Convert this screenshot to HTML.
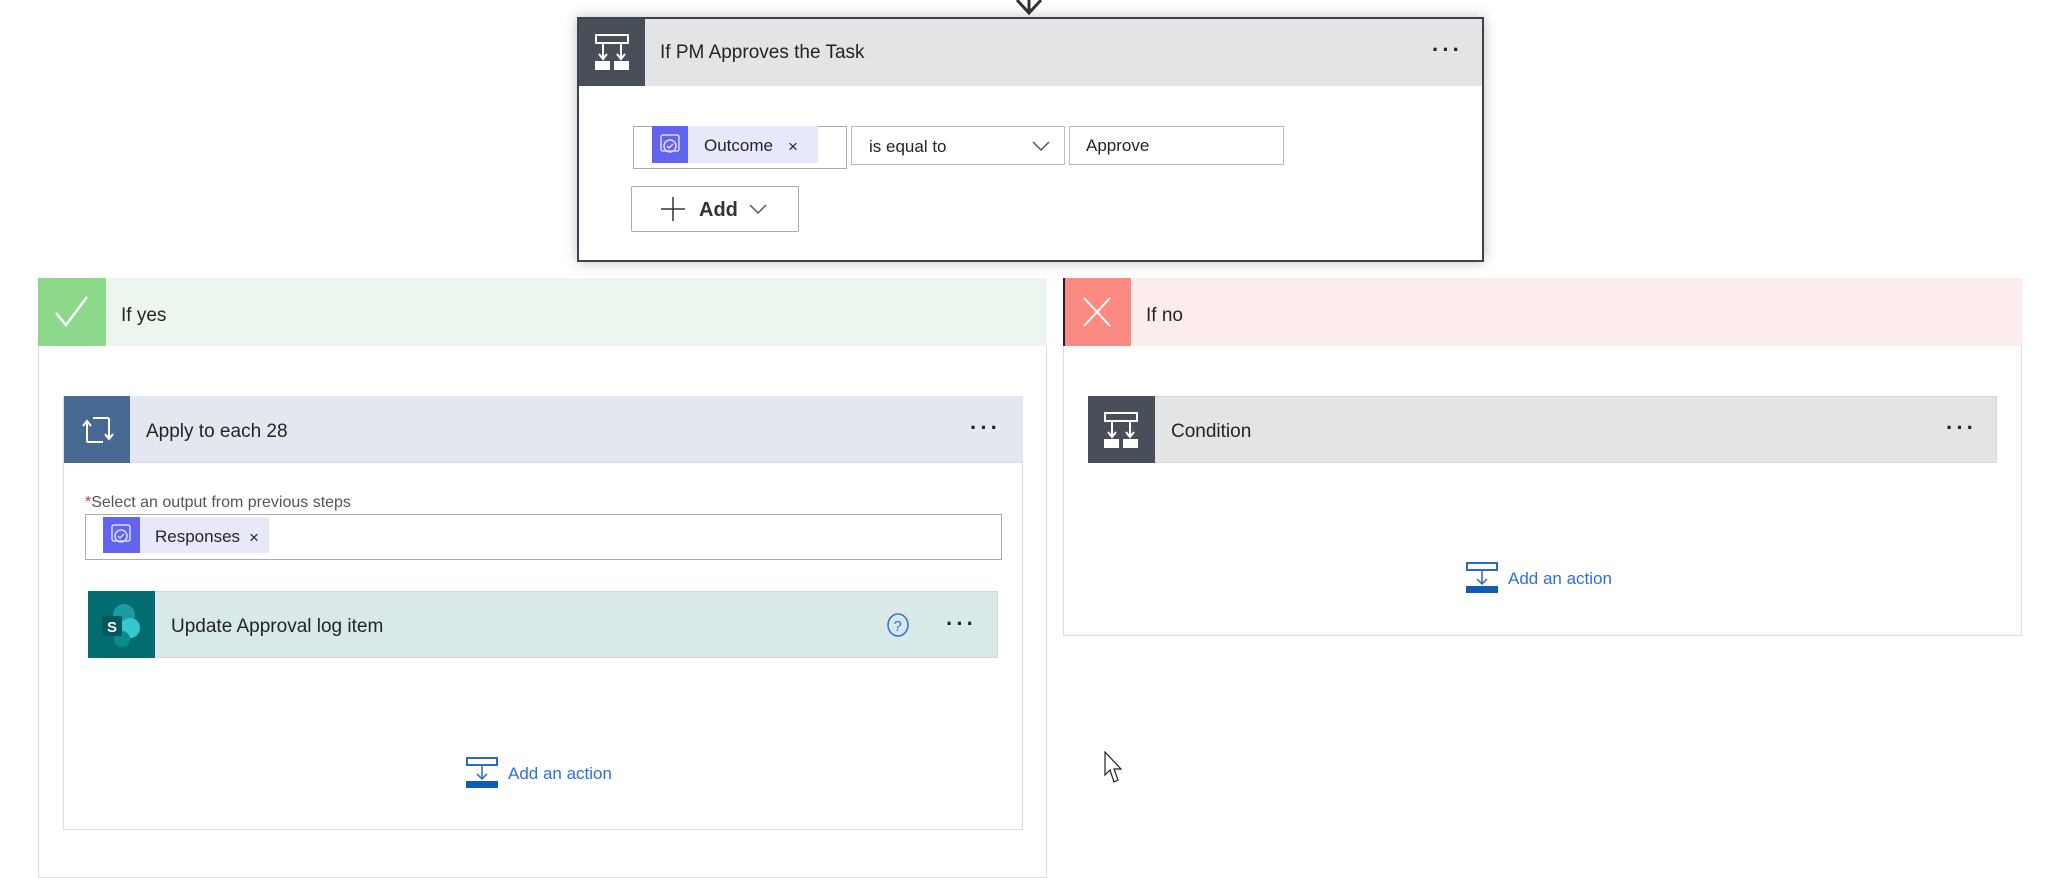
<!DOCTYPE html>
<html><head><meta charset="utf-8"><style>
body{margin:0;width:2048px;height:843px;background:#fff;position:relative;overflow:hidden;font-family:"Liberation Sans",sans-serif;color:#252423}
.a{position:absolute;box-sizing:border-box}
.t{position:absolute;white-space:nowrap}
.dots{position:absolute;font-size:22px;letter-spacing:3px;font-weight:bold;line-height:10px}
.ad{color:#2f6ee0;font-size:17px}
</style></head><body>
<svg class="a" style="left:1014px;top:0" width="30" height="18"><path d="M3 0 L15 13 L27 0 M15 13 L15 0" stroke="#333" stroke-width="3" fill="none"/></svg>

<div class="a" style="left:577px;top:17px;width:907px;height:245px;border:2px solid #3c434c;box-shadow:0 0 12px rgba(0,0,0,.25);background:#fff"></div>
<div class="a" style="left:579px;top:19px;width:903px;height:67px;background:#e3e4e6"></div>
<div class="a" style="left:579px;top:19px;width:66px;height:67px;background:#484f58"></div>
<svg class="a" style="left:594px;top:33px" width="36" height="38"><g stroke="#fff" stroke-width="2" fill="none"><rect x="2" y="2" width="32" height="8"/><path d="M9 10V26M27 10V26M5 21l4 5 4-5M23 21l4 5 4-5"/></g><rect x="1" y="28" width="15" height="9" fill="#fff"/><rect x="20" y="28" width="15" height="9" fill="#fff"/></svg>
<div class="t" style="left:660px;top:42px;font-size:19px">If PM Approves the Task</div>
<div class="dots" style="left:1432px;top:45px">···</div>

<div class="a" style="left:633px;top:126px;width:214px;height:43px;border:1px solid #aaa"></div>
<div class="a" style="left:652px;top:126px;width:166px;height:37px;background:#e8e8fb"></div>
<div class="a" style="left:652px;top:126px;width:36px;height:37px;background:#6264f0"></div>
<svg class="a" style="left:658px;top:133px" width="24" height="24"><g stroke="#dcdcff" stroke-width="1.5" fill="none"><rect x="3" y="2" width="18" height="16" rx="2"/><circle cx="12" cy="13" r="6"/><path d="M9 13l2 2 4-4"/></g></svg>
<div class="t" style="left:704px;top:136px;font-size:17px">Outcome</div>
<div class="t" style="left:788px;top:137px;font-size:17px">×</div>
<div class="a" style="left:851px;top:126px;width:214px;height:39px;border:1px solid #bbb"></div>
<div class="t" style="left:869px;top:137px;font-size:17px">is equal to</div>
<svg class="a" style="left:1031px;top:139px" width="20" height="14"><path d="M2 3l8 8 8-8" stroke="#555" stroke-width="1.5" fill="none"/></svg>
<div class="a" style="left:1069px;top:126px;width:215px;height:39px;border:1px solid #bbb"></div>
<div class="t" style="left:1086px;top:136px;font-size:17px">Approve</div>
<div class="a" style="left:631px;top:186px;width:168px;height:46px;border:1px solid #aaa;border-radius:2px"></div>
<svg class="a" style="left:660px;top:196px" width="26" height="26"><path d="M13 1V25M1 13H25" stroke="#333" stroke-width="1.5"/></svg>
<div class="t" style="left:699px;top:199px;font-size:20px;font-weight:bold;color:#333">Add</div>
<svg class="a" style="left:748px;top:202px" width="20" height="14"><path d="M2 3l8 8 8-8" stroke="#555" stroke-width="1.5" fill="none"/></svg>

<div class="a" style="left:38px;top:278px;width:1009px;height:600px;border:1px solid #ddd"></div>
<div class="a" style="left:38px;top:278px;width:1009px;height:68px;background:#edf6ee"></div>
<div class="a" style="left:38px;top:278px;width:68px;height:68px;background:#8cd98c"></div>
<svg class="a" style="left:53px;top:295px" width="40" height="34"><path d="M3 18l10 12L34 2" stroke="#fff" stroke-width="2.5" fill="none"/></svg>
<div class="t" style="left:121px;top:305px;font-size:19px">If yes</div>

<div class="a" style="left:63px;top:396px;width:960px;height:434px;border:1px solid #ddd"></div>
<div class="a" style="left:64px;top:396px;width:959px;height:67px;background:#e3e7ef;border-bottom:1px solid #d8dbe2"></div>
<div class="a" style="left:64px;top:396px;width:66px;height:67px;background:#486991"></div>
<svg class="a" style="left:82px;top:414px" width="32" height="32"><g stroke="#fff" stroke-width="2" fill="none"><path d="M5 28V8M1 12l4-5 4 5M5 28h16M27 4v20M23 20l4 5 4-5M27 4H11"/></g></svg>
<div class="t" style="left:146px;top:421px;font-size:19px">Apply to each 28</div>
<div class="dots" style="left:970px;top:423px">···</div>

<div class="t" style="left:85px;top:494px;font-size:16px;color:#555"><span style="color:#d13438">*</span>Select an output from previous steps</div>
<div class="a" style="left:85px;top:514px;width:917px;height:46px;border:1px solid #aaa"></div>
<div class="a" style="left:103px;top:517px;width:166px;height:36px;background:#e8e8fb"></div>
<div class="a" style="left:103px;top:517px;width:37px;height:36px;background:#6264f0"></div>
<svg class="a" style="left:109px;top:523px" width="24" height="24"><g stroke="#dcdcff" stroke-width="1.5" fill="none"><rect x="3" y="2" width="18" height="16" rx="2"/><circle cx="12" cy="13" r="6"/><path d="M9 13l2 2 4-4"/></g></svg>
<div class="t" style="left:155px;top:527px;font-size:17px">Responses</div>
<div class="t" style="left:249px;top:528px;font-size:17px">×</div>

<div class="a" style="left:88px;top:591px;width:910px;height:67px;background:#d9e8e9;border:1px solid #cfdcdc"></div>
<div class="a" style="left:88px;top:591px;width:67px;height:67px;background:#036c70"></div>
<svg class="a" style="left:98px;top:601px" width="48" height="48"><circle cx="26" cy="14" r="11" fill="#1a9ba1"/><circle cx="32" cy="27" r="10" fill="#37c6d0"/><circle cx="24" cy="38" r="8" fill="#0b8a8f"/><rect x="4" y="15" width="20" height="20" rx="2" fill="#04585c"/><text x="9" y="31" font-family="Liberation Sans" font-size="15" font-weight="bold" fill="#fff">S</text></svg>
<div class="t" style="left:171px;top:616px;font-size:19px">Update Approval log item</div>
<svg class="a" style="left:886px;top:612px" width="24" height="26"><ellipse cx="12" cy="13" rx="10" ry="11" stroke="#2f6ee0" stroke-width="1.5" fill="none"/><text x="7.5" y="19" font-size="15" fill="#2f6ee0" font-family="Liberation Sans">?</text></svg>
<div class="dots" style="left:946px;top:619px">···</div>

<svg class="a" style="left:466px;top:757px" width="32" height="31"><rect x="1" y="1" width="30" height="7" stroke="#2a6cc4" stroke-width="2" fill="none"/><path d="M16 8V22M11 17l5 5 5-5" stroke="#2a6cc4" stroke-width="1.5" fill="none"/><rect x="0" y="24" width="32" height="7" fill="#0f5cb5"/></svg>
<div class="t ad" style="left:508px;top:764px">Add an action</div>

<div class="a" style="left:1063px;top:278px;width:959px;height:358px;border:1px solid #ddd"></div>
<div class="a" style="left:1063px;top:278px;width:959px;height:68px;background:#fdecec"></div>
<div class="a" style="left:1063px;top:278px;width:68px;height:68px;background:#fa8a82;border-left:2px solid #222"></div>
<svg class="a" style="left:1080px;top:296px" width="34" height="32"><path d="M4 2L30 30M30 2L4 30" stroke="#fff" stroke-width="2"/></svg>
<div class="t" style="left:1146px;top:305px;font-size:19px">If no</div>

<div class="a" style="left:1088px;top:396px;width:909px;height:67px;background:#e3e4e6;border:1px solid #d6d6d6"></div>
<div class="a" style="left:1088px;top:396px;width:67px;height:67px;background:#484f58"></div>
<svg class="a" style="left:1103px;top:411px" width="36" height="38"><g stroke="#fff" stroke-width="2" fill="none"><rect x="2" y="2" width="32" height="8"/><path d="M9 10V26M27 10V26M5 21l4 5 4-5M23 21l4 5 4-5"/></g><rect x="1" y="28" width="15" height="9" fill="#fff"/><rect x="20" y="28" width="15" height="9" fill="#fff"/></svg>
<div class="t" style="left:1171px;top:421px;font-size:19px">Condition</div>
<div class="dots" style="left:1946px;top:423px">···</div>

<svg class="a" style="left:1466px;top:562px" width="32" height="31"><rect x="1" y="1" width="30" height="7" stroke="#2a6cc4" stroke-width="2" fill="none"/><path d="M16 8V22M11 17l5 5 5-5" stroke="#2a6cc4" stroke-width="1.5" fill="none"/><rect x="0" y="24" width="32" height="7" fill="#0f5cb5"/></svg>
<div class="t ad" style="left:1508px;top:569px">Add an action</div>

<svg class="a" style="left:1104px;top:751px" width="22" height="34"><path d="M1 1V24L6 19L10 31L14 29L10 18H17Z" fill="#fff" stroke="#222" stroke-width="1.2"/></svg>
</body></html>
